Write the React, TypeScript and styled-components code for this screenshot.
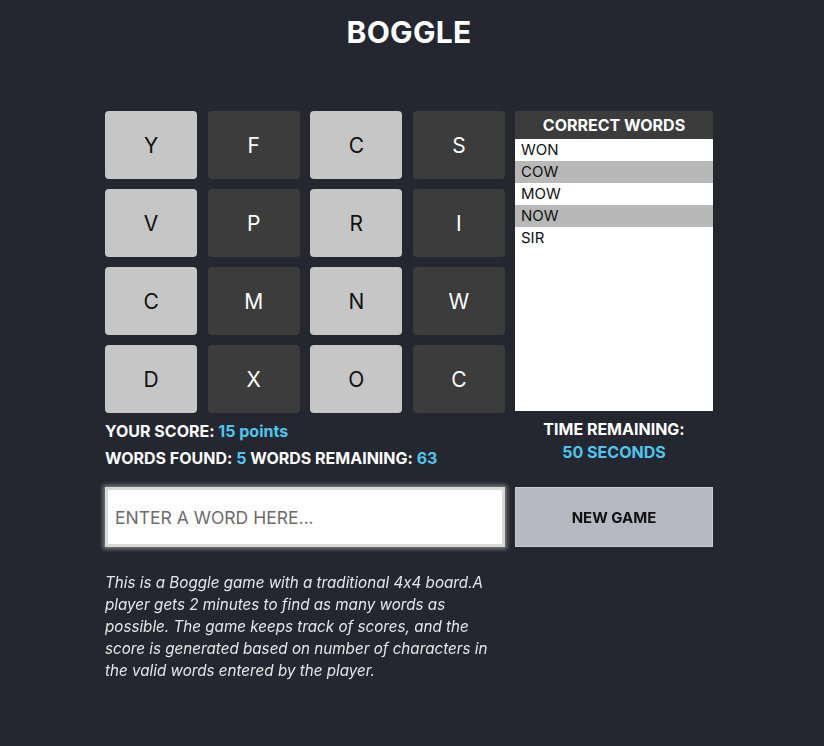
import { ReactElement } from 'react';
import styled, { createGlobalStyle } from 'styled-components';

const GlobalStyle = createGlobalStyle`
  html, body {
    margin: 0;
    padding: 0;
    background: #24272f;
  }
  body {
    font-family: Inter, 'Noto Sans', sans-serif;
    font-feature-settings: 'calt' 0;
    color: #ffffff;
  }
`;

const Page = styled.div`
  min-height: 746px;
  padding-right: 6px;
  box-sizing: border-box;
`;

const Title = styled.h1`
  margin: 0;
  padding-top: 14px;
  text-align: center;
  font-size: 30px;
  font-weight: 700;
  line-height: 36px;
  letter-spacing: 0.3px;
`;

const Main = styled.div`
  width: 608px;
  margin: 61px auto 0;
  display: grid;
  grid-template-columns: 400px 198px;
  column-gap: 10px;
`;

const Board = styled.div`
  display: grid;
  grid-template-columns: repeat(4, 1fr);
  grid-auto-rows: 68px;
  column-gap: 10.5px;
  row-gap: 10px;
  height: 302px;
`;

const Tile = styled.div<{ $light: boolean }>`
  display: flex;
  align-items: center;
  justify-content: center;
  border-radius: 4px;
  background: ${(p) => (p.$light ? '#c6c6c6' : '#3c3c3c')};
  color: ${(p) => (p.$light ? '#111111' : '#ffffff')};
  font-size: 21px;
`;

const WordsPanel = styled.div`
  background: #ffffff;
  height: 300px;
  display: flex;
  flex-direction: column;
`;

const WordsHeader = styled.div`
  background: #3c3c3c;
  height: 28px;
  display: flex;
  align-items: center;
  justify-content: center;
  font-size: 16px;
  font-weight: 700;
  color: #ffffff;
`;

const WordRow = styled.div<{ $shaded: boolean }>`
  height: 22px;
  line-height: 22px;
  padding-left: 6px;
  font-size: 15px;
  color: #111111;
  background: ${(p) => (p.$shaded ? '#b8b8b8' : '#ffffff')};
`;

const Stats = styled.div`
  padding-top: 8px;
  display: flex;
  flex-direction: column;
  gap: 7px;
`;

const StatLine = styled.div`
  font-size: 16px;
  font-weight: 700;
  line-height: 20px;
`;

const Highlight = styled.span`
  color: #4ec6ef;
`;

const Timer = styled.div`
  padding-top: 5px;
  text-align: center;
  font-size: 16px;
  font-weight: 700;
  line-height: 23px;
`;

const TimerValue = styled.div`
  color: #4ec6ef;
`;

const WordInput = styled.input`
  margin-top: 19px;
  height: 60px;
  box-sizing: border-box;
  width: 400px;
  border: 3px solid #d9d9d9;
  outline: none;
  box-shadow: 0 0 4px 2px rgba(160, 160, 160, 0.7);
  padding: 0 7px;
  font-family: Inter, 'Noto Sans', sans-serif;
  font-size: 17.5px;
  color: #222222;
  caret-color: #222222;

  &::placeholder {
    color: #6c6c6c;
  }
`;

const NewGameButton = styled.button`
  margin-top: 19px;
  height: 60px;
  border: 1px solid #c9cbd0;
  background: #b6b9c0;
  font-family: Inter, 'Noto Sans', sans-serif;
  font-size: 15px;
  font-weight: 700;
  color: #111111;
  cursor: pointer;
`;

const Description = styled.p`
  margin: 25px 0 0;
  font-size: 15.2px;
  font-style: italic;
  line-height: 22px;
  color: #e6e6e6;
  width: 400px;
`;

const letters = ['Y', 'F', 'C', 'S', 'V', 'P', 'R', 'I', 'C', 'M', 'N', 'W', 'D', 'X', 'O', 'C'];
const words = ['WON', 'COW', 'MOW', 'NOW', 'SIR'];

const App = (): ReactElement => (
  <Page>
    <GlobalStyle />
    <Title>BOGGLE</Title>
    <Main>
      <Board>
        {letters.map((letter, i) => (
          <Tile key={i} $light={i % 2 === 0}>
            {letter}
          </Tile>
        ))}
      </Board>
      <WordsPanel>
        <WordsHeader>CORRECT WORDS</WordsHeader>
        {words.map((word, i) => (
          <WordRow key={word} $shaded={i % 2 === 1}>
            {word}
          </WordRow>
        ))}
      </WordsPanel>
      <Stats>
        <StatLine>
          YOUR SCORE: <Highlight>15 points</Highlight>
        </StatLine>
        <StatLine>
          WORDS FOUND: <Highlight>5</Highlight> WORDS REMAINING: <Highlight>63</Highlight>
        </StatLine>
      </Stats>
      <Timer>
        TIME REMAINING:
        <TimerValue>50 SECONDS</TimerValue>
      </Timer>
      <WordInput placeholder="ENTER A WORD HERE..." autoFocus />
      <NewGameButton>NEW GAME</NewGameButton>
      <Description>
        This is a Boggle game with a traditional 4x4 board.A player gets 2 minutes to find as
        many words as possible. The game keeps track of scores, and the score is generated based
        on number of characters in the valid words entered by the player.
      </Description>
    </Main>
  </Page>
);

export default App;
